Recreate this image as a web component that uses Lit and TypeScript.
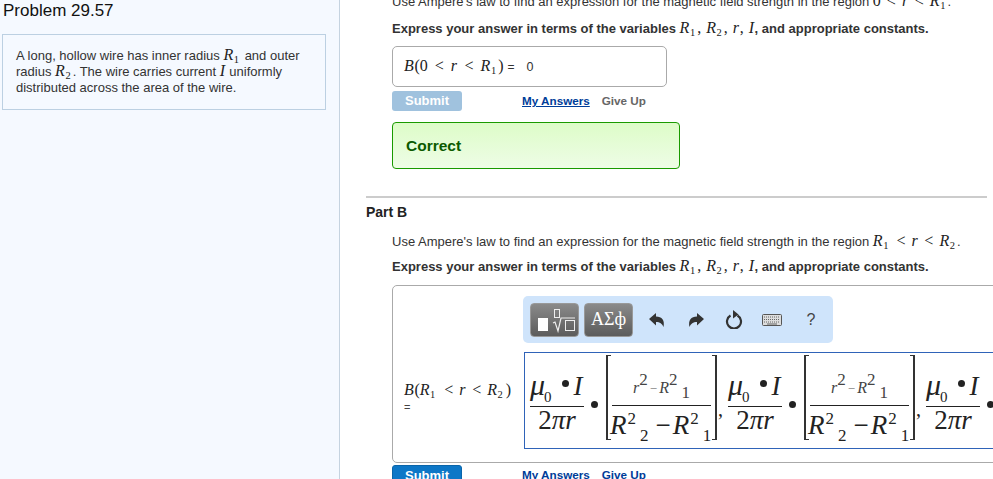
import { LitElement, html, css, svg } from "lit";
import { customElement } from "lit/decorators.js";

const v = (s: string, sub?: string) => html`<span class="mv">${s}</span>${sub ? html`<sub class="ms">${sub}</sub>` : ""}`;
const lt = html`<span class="lt">&lt;</span>`;
const comma = html`<span class="mc">,</span>`;
const vars = html`${v("R", "1")}${comma}${v("R", "2")}${comma}${v("r")}${comma}${v("I")}`;

const frac = html`<span class="frac"><span class="num"><i class="mu">μ</i><sub>0</sub><b class="dot"></b><i>I</i></span><span class="den">2<i>πr</i></span></span>`;
const bracket = html`<span class="brk"><span class="bfrac"><span class="bnum"><i>r</i><sup>2</sup><span class="mi">−</span><i>R</i><sup>2</sup><sub>1</sub></span><span class="bden"><i>R</i><sup>2</sup><sub>2</sub><span class="mi2">−</span><i>R</i><sup>2</sup><sub>1</sub></span></span></span>`;

@customElement("app-root")
export class AppRoot extends LitElement {
  static styles = css`
    :host { display: flex; width: 993px; height: 479px; overflow: hidden; background: #fff; color: #333; font: 13px/16px "Liberation Sans", Arial, sans-serif; }
    .side { box-sizing: border-box; width: 340px; height: 479px; flex: none; background: #f5f9ff; border-right: 1px solid #c5d3e0; padding: 0 0 0 2px; }
    h1 { margin: 0 0 0 1px; font: 400 17px/22px "Liberation Sans", Arial, sans-serif; color: #111; }
    .prob { box-sizing: border-box; margin-top: 12px; width: 324px; height: 76px; border: 1px solid #bcd0e2; padding: 13px 13px; line-height: 16px; color: #333; }
    .main { flex: 1; min-width: 0; padding: 0 0 0 26px; overflow: hidden; }
    .mv { font: italic 16px/1px "Liberation Serif", serif; color: #222; letter-spacing: .6px; }
    .ms { font: 10.500px/1px "Liberation Serif", serif; vertical-align: -3px; color: #222; margin-right: 2px; }
    .mp { font: 16px/1px "Liberation Serif", serif; color: #222; }
    .mc { font: 16px/1px "Liberation Serif", serif; color: #222; margin-right: 5px; }
    .lt { font: 16px/1px "Liberation Serif", serif; color: #222; margin: 0 6px; }
    .indent { padding-left: 26px; }
    .intro { margin-top: -6px; height: 16px; white-space: nowrap; }
    .ask { margin-top: 11px; height: 16px; white-space: nowrap; font-weight: 700; }
    .ask2 { margin-top: 9px; height: 16px; white-space: nowrap; font-weight: 700; }
    .ansbox { box-sizing: border-box; margin-top: 9px; width: 275px; height: 41px; border: 1px solid #aaa; border-radius: 5px; background: #fff; display: flex; align-items: center; padding: 0 0 0 11px; white-space: nowrap; }
    .expr .lt { margin: 0 7px; }
    .ansbox .eq { margin-left: 4px; font-size: 12px; }
    .ansbox .val { margin-left: 12px; font-size: 12.500px; }
    .actions { display: flex; align-items: center; height: 20px; margin-top: 4px; font-weight: 700; font-size: 11.700px; }
    .submit { box-sizing: border-box; width: 70px; height: 20px; border-radius: 3px; background: #a0c2de; color: #fff; text-align: center; line-height: 19px; font-size: 13px; }
    .myans { margin-left: 60px; color: #003d99; text-decoration: underline; }
    .giveup { margin-left: 12px; color: #666; }
    .correct { box-sizing: border-box; margin-top: 11px; width: 288px; height: 47px; border: 1px solid #1a9a00; border-radius: 4px; background: linear-gradient(#ddfcc8, #eefde6); color: #0b5a00; font: 700 15.500px/45px "Liberation Sans", Arial, sans-serif; padding-left: 13px; }
    hr { margin: 27px 6px 0 0; border: 0; height: 2px; background: #ccc; }
    h2 { margin: 6px 0 0; font: 700 14px/16px "Liberation Sans", Arial, sans-serif; color: #222; }
    .intro2 { margin-top: 14px; height: 16px; white-space: nowrap; }
    .editor { box-sizing: border-box; margin-top: 10px; width: 640px; height: 178px; border: 1px solid #aaa; border-radius: 5px; padding: 10px 0 0 0; background: #fff; }
    .toolbar { box-sizing: border-box; margin-left: 130px; width: 310px; height: 47px; background: #cfe4fb; border-radius: 5px; display: flex; align-items: center; padding: 0 0 0 7px; }
    .tbtn { box-sizing: border-box; width: 49px; height: 34px; border-radius: 4px; border: 1px solid #999; background: linear-gradient(#8a8a8a, #5c5c5c); color: #fff; display: flex; align-items: center; justify-content: center; font: 18px "Liberation Serif", serif; }
    .tbtn + .tbtn { margin-left: 5px; }
    .ico { flex: none; display: block; }
    .help { color: #444; font: 16px "Liberation Sans", Arial, sans-serif; width: 14px; text-align: center; }
    .row { display: flex; margin-top: 9px; }
    .lbl { box-sizing: border-box; flex: none; width: 131px; padding: 31px 0 0 11px; white-space: nowrap; line-height: 16px; }
    .lbl .lt { margin: 0 6px; }
    .lbl .ms { margin-right: 3px; }
    .lbl .eq { display: block; font-size: 11px; line-height: 12px; margin-top: 2px; color: #444; }
    .fbox { box-sizing: border-box; flex: none; width: 507px; height: 97px; border: 1px solid #2f63b8; border-right: 0; display: flex; align-items: flex-start; padding: 2px 0 0 5px; white-space: nowrap; font-family: "Liberation Serif", serif; color: #222; overflow: hidden; }
    .frac { display: flex; flex-direction: column; align-items: center; width: 54px; flex: none; font-size: 27px; line-height: 30px; padding-top: 15px; }
    .num { box-sizing: border-box; width: 100%; height: 37px; border-bottom: 1.500px solid #222; display: flex; align-items: baseline; white-space: nowrap; line-height: 30px; }
    .num i { flex: none; }
    .mu { font-size: 30px; }
    .num sub { font-size: 15px; line-height: 0; transform: translateY(7px); margin: 0 10px 0 -1px; }
    .dot, .bigdot { display: inline-block; border-radius: 50%; background: #222; }
    .dot { flex: none; width: 7px; height: 7px; margin: 0 5px 0 0; transform: translateY(-8px); }
    .den { height: 28px; line-height: 26px; }
    .bigdot { width: 7px; height: 7px; margin: 46px 8px 0 7px; flex: none; }
    .brk { flex: none; box-sizing: border-box; width: 111px; height: 85px; margin-top: 0; border: solid #333; border-width: 1.500px 2px; position: relative; padding: 0 4px; display: flex; }
    .brk::before { content: ""; position: absolute; left: 3px; right: 3px; top: -2px; bottom: -2px; background: #fff; }
    .bfrac { position: relative; flex: 1; display: flex; flex-direction: column; align-items: center; min-width: 0; }
    .bnum { width: 100%; height: 50px; border-bottom: 1.500px solid #222; box-sizing: border-box; text-align: center; font-size: 16px; line-height: 64px; color: #444; }
    .bnum sup { font-size: 17px; line-height: 0; vertical-align: 8px; }
    .bnum sub { font-size: 17px; line-height: 0; vertical-align: -5px; margin-left: 4px; }
    .mi { color: #777; margin: 0 2px; font-size: 13px; }
    .bden { font-size: 27px; line-height: 38px; margin-left: -2px; }
    .bden sup { font-size: 17px; line-height: 0; vertical-align: 10px; margin-left: 1px; }
    .bden sub { font-size: 17px; line-height: 0; vertical-align: -7px; margin-left: 4px; }
    .mi2 { margin: 0 2px 0 7px; }
    .comma { flex: none; width: 11px; font-size: 20px; line-height: 20px; margin-top: 44px; padding-left: 1px; box-sizing: border-box; }
    .actions2 { margin-top: 2px; }
    .submit2 { background: #0d77c7; border: 1px solid #0a65aa; }
    .giveup2 { color: #003d99; }
  `;

  render() {
    const undo = svg`<path d="M0 7 L7 1 V4.500 C13 4.500 16 8.500 14.500 15 C13 11.500 11 10 7 10 V13.500 Z" fill="#333"/>`;
    const redo = svg`<path d="M16 7 L9 1 V4.500 C3 4.500 0 8.500 1.500 15 C3 11.500 5 10 9 10 V13.500 Z" fill="#333"/>`;
    return html`
      <div class="side">
        <h1>Problem 29.57</h1>
        <div class="prob">A long, hollow wire has inner radius ${v("R", "1")} and outer radius ${v("R", "2")}. The wire carries current ${v("I")} uniformly distributed across the area of the wire.</div>
      </div>
      <div class="main">
        <div class="indent">
          <div class="intro">Use Ampere's law to find an expression for the magnetic field strength in the region <span class="mp">0</span>${lt}${v("r")}${lt}${v("R", "1")}.</div>
          <div class="ask">Express your answer in terms of the variables ${vars}, and appropriate constants.</div>
          <div class="ansbox"><span class="expr">${v("B")}<span class="mp">(0</span>${lt}${v("r")}${lt}${v("R", "1")}<span class="mp">)</span></span><span class="eq">=</span><span class="val">0</span></div>
          <div class="actions"><span class="submit">Submit</span><span class="myans">My Answers</span><span class="giveup">Give Up</span></div>
          <div class="correct">Correct</div>
        </div>
        <hr />
        <h2>Part B</h2>
        <div class="indent">
          <div class="intro2">Use Ampere's law to find an expression for the magnetic field strength in the region ${v("R", "1")}${lt}${v("r")}${lt}${v("R", "2")}.</div>
          <div class="ask2">Express your answer in terms of the variables ${vars}, and appropriate constants.</div>
          <div class="editor">
            <div class="toolbar">
              <span class="tbtn"><svg width="45" height="30" viewBox="0 0 45 30" role="img" aria-label="templates">
                <rect x="6" y="13" width="10" height="13" fill="#fff"/>
                <rect x="22.500" y="4.500" width="5" height="8" fill="none" stroke="#eee"/>
                <path d="M21 18 l2 -1 l3 9 l3 -13 h14" fill="none" stroke="#eee" stroke-width="1.200"/>
                <rect x="33.500" y="15.500" width="9" height="10" fill="none" stroke="#eee"/>
              </svg></span>
              <span class="tbtn">ΑΣф</span>
              <svg class="ico" style="margin-left:16px" width="16" height="16" viewBox="0 0 16 16">${undo}</svg>
              <svg class="ico" style="margin-left:23px" width="16" height="16" viewBox="0 0 16 16">${redo}</svg>
              <svg class="ico" style="margin-left:21px" width="18" height="19" viewBox="0 0 18 19"><path d="M5.500 5.500 A7 7 0 1 0 12.500 5.500" fill="none" stroke="#333" stroke-width="2.200"/><path d="M8 0 L13.500 4.500 L8 8.500 Z" fill="#333"/></svg>
              <svg class="ico" style="margin-left:19px" width="20" height="12" viewBox="0 0 20 12"><rect x=".5" y=".5" width="19" height="11" rx="1" fill="#ddd" stroke="#555"/><path d="M2 3 H18 M2 5.500 H18 M2 8 H18" stroke="#666" stroke-dasharray="1 1"/><path d="M5 10 H15" stroke="#666"/></svg>
              <span class="help" style="margin-left:22px">?</span>
            </div>
            <div class="row">
              <div class="lbl">${v("B")}<span class="mp">(</span>${v("R", "1")}${lt}${v("r")}${lt}${v("R", "2")}<span class="mp">)</span><span class="eq">=</span></div>
              <div class="fbox">
                ${frac}<span class="bigdot"></span>${bracket}<span class="comma">,</span>
                ${frac}<span class="bigdot"></span>${bracket}<span class="comma">,</span>
                ${frac}<span class="bigdot"></span>
              </div>
            </div>
          </div>
          <div class="actions actions2"><span class="submit submit2">Submit</span><span class="myans">My Answers</span><span class="giveup giveup2">Give Up</span></div>
        </div>
      </div>
    `;
  }
}
